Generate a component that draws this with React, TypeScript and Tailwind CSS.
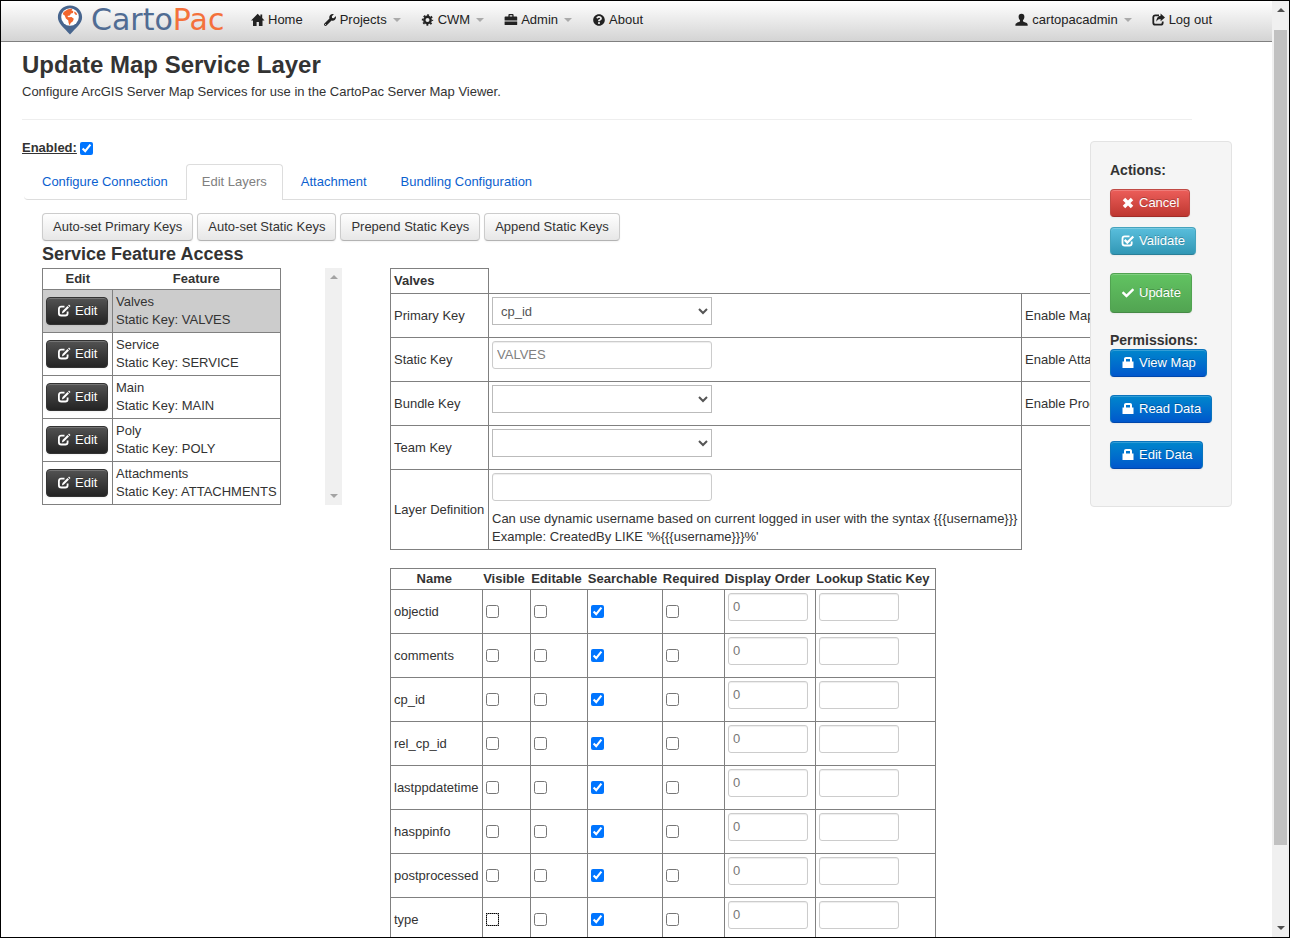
import type { ReactNode } from 'react';
import { FaCheck, FaQuestionCircle, FaWrench } from 'react-icons/fa';
import clsx from 'clsx';

const FEATURES = [
  { name: 'Valves', key: 'VALVES' },
  { name: 'Service', key: 'SERVICE' },
  { name: 'Main', key: 'MAIN' },
  { name: 'Poly', key: 'POLY' },
  { name: 'Attachments', key: 'ATTACHMENTS' },
];

const FIELDS = ['objectid', 'comments', 'cp_id', 'rel_cp_id', 'lastppdatetime', 'hasppinfo', 'postprocessed', 'type'];

const TABS = ['Configure Connection', 'Edit Layers', 'Attachment', 'Bundling Configuration'];

const KEY_ACTIONS = ['Auto-set Primary Keys', 'Auto-set Static Keys', 'Prepend Static Keys', 'Append Static Keys'];

/* ---------- icons ---------- */

function Icon({ children }: { children: ReactNode }) {
  return (
    <svg viewBox="0 0 14 14" className="w-3.5 h-3.5 shrink-0" fill="currentColor" aria-hidden="true">
      {children}
    </svg>
  );
}

const HomeIcon = () => (
  <Icon>
    <path d="M6.7.8 0 7.4h2V13h3.6V9h2.3v4h3.6V7.4h2L11.2 5V1.6H9.4v1.8z" />
  </Icon>
);

const CogIcon = () => (
  <Icon>
    <circle cx="6.5" cy="7" r="3.2" fill="none" stroke="currentColor" strokeWidth="2.4" />
    <circle cx="6.5" cy="7" r="4.9" fill="none" stroke="currentColor" strokeWidth="1.6" strokeDasharray="1.9 1.95" strokeDashoffset="0.95" />
  </Icon>
);

const BriefcaseIcon = () => (
  <Icon>
    <path d="M4.4 3.5V2.2c0-.7.4-1.200 1.100-1.200h3c.7 0 1.100.5 1.100 1.200v1.300h2.800c.5 0 .8.3.8.8v3.200H.6V4.300c0-.5.3-.8.8-.8zm1.300 0h2.600V2.300H5.700zM.6 8.400h12.600v3c0 .4-.2.6-.6.6H1.200c-.4 0-.6-.2-.6-.6z" />
  </Icon>
);

const UserIcon = () => (
  <Icon>
    <path d="M6.500.8c1.900 0 2.900 1.300 2.900 3 0 1.400-.6 2.600-1.300 3.300-.2.300-.2 1.200.1 1.500.8.700 3.900 1.200 4.300 2.400.2.500.2 1.200.2 1.700H.4c0-.5 0-1.200.2-1.700C1 9.800 4 9.300 4.800 8.600c.3-.3.3-1.200.1-1.500-.7-.7-1.300-1.900-1.300-3.300 0-1.700 1-3 2.900-3z" />
  </Icon>
);

const LogoutIcon = () => (
  <Icon>
    <path d="M7 2.300H3.300C2 2.300 1.300 3 1.300 4.300v5.400c0 1.300.7 2 2 2h5.400c1.300 0 2-.7 2-2V8.500" fill="none" stroke="currentColor" strokeWidth="1.800" />
    <path d="M8.600.6 13 4.400 8.600 8.200V6C6.700 6 5.500 6.600 4.300 8.700 4.300 5.300 5.900 3 8.600 2.800z" />
  </Icon>
);

const EditIcon = () => (
  <Icon>
    <path d="M7.500 2.700H4.300C2.600 2.700 1.900 3.500 1.900 5v4.200c0 1.600.7 2.300 2.400 2.300h4c1.600 0 2.300-.7 2.300-2.300V7.500" fill="none" stroke="currentColor" strokeWidth="1.800" />
    <path d="m4.900 9.400.6-2.300 5-5 1.500 1.500-5 5zM11.100 1.500l.9-.9 1.500 1.500-.9.900z" />
  </Icon>
);

const ValidateIcon = () => (
  <Icon>
    <path d="M8.500 2.300H3.800C2.300 2.300 1.500 3 1.500 4.600v4.600c0 1.600.8 2.300 2.300 2.300h4.600c1.600 0 2.300-.7 2.300-2.300V7.500" fill="none" stroke="currentColor" strokeWidth="1.800" />
    <path d="m3.700 5.900 2.600 2.600 6-6" fill="none" stroke="currentColor" strokeWidth="2.300" />
  </Icon>
);

const RemoveIcon = () => (
  <Icon>
    <path d="m3 3 8 8M11 3l-8 8" fill="none" stroke="currentColor" strokeWidth="3.500" />
  </Icon>
);

const LockIcon = () => (
  <Icon>
    <path d="M1.500 5.500H3V3C3 1.800 3.800 1 5 1h4c1.200 0 2 .8 2 2v2.500h1.500V12h-11zm3.500 0h4V3H5z" />
  </Icon>
);

function Triangle({ up = false, className }: { up?: boolean; className: string }) {
  return (
    <svg viewBox="0 0 8 4" className={className} fill="currentColor" aria-hidden="true">
      <path d={up ? 'M4 0l4 4H0z' : 'M0 0h8L4 4z'} />
    </svg>
  );
}

function Logo() {
  return (
    <a href="#" className="flex items-center gap-2 w-[184px]">
      <svg viewBox="0 0 26 30" className="w-[26px] h-[30px] shrink-0" aria-hidden="true">
        <path d="M13 .500C6 .500.900 5.700.900 12.200.900 18.500 6.500 22 13 29.500 19.500 22 25.100 18.500 25.100 12.200 25.100 5.700 20 .500 13 .500z" fill="#47658e" />
        <circle cx="13" cy="12" r="8.800" fill="#fff" />
        <path d="M8.500 5.800c2-1.800 4.500-2.400 7-2l-1 1.700 1.800.6-.3 2-2 .5-1.200 2-2.500.4 1.200 1.200 3-.2 2.300 1.800-.9 2.500-2.300 1.800-.8 2.500-1.200-2.600-.3-2.600-2.400-2-1.200-3-1.800-1.200c0-1.300 1-2.400 2.600-3.400z" fill="#f1662f" />
        <path d="m17.500 6.500 2 1.400.6 2.200-1.600-.4-1.300-1.600z" fill="#f1662f" />
      </svg>
      <span className="font-['DejaVu_Sans',sans-serif] text-[30px] leading-[30px] text-[#506c93]">
        Carto<span className="text-[#f4713b]">Pac</span>
      </span>
    </a>
  );
}

/* ---------- controls ---------- */

function NavItem({ icon, label, menu = false }: { icon: ReactNode; label: string; menu?: boolean }) {
  return (
    <a href="#" className="flex items-center gap-[3px] px-2.5 text-[#222]">
      {icon}
      <span>{label}</span>
      {menu && <Triangle className="w-2 h-1 ml-[3px] text-[#aaa]" />}
    </a>
  );
}

const BUTTON_STYLES = {
  plain: 'bg-linear-to-b from-white to-[#e6e6e6] border-[#ccc] border-b-[#b3b3b3] text-[#333]',
  dark: 'bg-linear-to-b from-[#555] to-[#222] border-[#333] text-white text-shadow-[0_-1px_0_rgba(0,0,0,0.25)]',
  danger: 'bg-linear-to-b from-[#ee5f5b] to-[#bd362f] border-[#c04a45] border-b-[#a12d28] text-white text-shadow-[0_-1px_0_rgba(0,0,0,0.25)]',
  info: 'bg-linear-to-b from-[#5bc0de] to-[#2f96b4] border-[#45a3bd] border-b-[#2a7f98] text-white text-shadow-[0_-1px_0_rgba(0,0,0,0.25)]',
  success: 'bg-linear-to-b from-[#62c462] to-[#51a351] border-[#51a351] border-b-[#468a46] text-white text-shadow-[0_-1px_0_rgba(0,0,0,0.25)]',
  primary: 'bg-linear-to-b from-[#0088cc] to-[#0055cc] border-[#0a74bd] border-b-[#0047ab] text-white text-shadow-[0_-1px_0_rgba(0,0,0,0.25)]',
};

interface ButtonProps {
  variant: keyof typeof BUTTON_STYLES;
  icon?: ReactNode;
  tall?: boolean;
  children: ReactNode;
}

function Button({ variant, icon, tall = false, children }: ButtonProps) {
  return (
    <button
      type="button"
      className={clsx(
        'flex items-center gap-1 px-2.5 border rounded bg-origin-border whitespace-nowrap',
        'shadow-[inset_0_1px_0_rgba(255,255,255,0.2),0_1px_2px_rgba(0,0,0,0.05)]',
        tall ? 'h-10' : 'h-7',
        BUTTON_STYLES[variant],
      )}
    >
      {icon}
      {children}
    </button>
  );
}

const INPUT = 'block h-7 px-1 mb-[9px] border border-[#ccc] rounded-[3px] bg-white text-[#777] shadow-[inset_0_1px_1px_rgba(0,0,0,0.075)]';
const SELECT = 'block w-[220px] h-7 px-1 mb-[9px] border border-[#bbb] bg-white text-[#555]';
const CELL = 'border border-[#808080] p-[3px]';

/* ---------- sections ---------- */

function Navbar() {
  return (
    <nav className="flex items-center h-[41px] pl-14 pr-[50px] pb-0.5 bg-linear-to-b from-white to-[#d4d4d4] border-b border-[#808080]">
      <Logo />
      <div className="flex">
        <NavItem icon={<HomeIcon />} label="Home" />
        <NavItem icon={<FaWrench className="w-3.5 h-3" />} label="Projects" menu />
        <NavItem icon={<CogIcon />} label="CWM" menu />
        <NavItem icon={<BriefcaseIcon />} label="Admin" menu />
        <NavItem icon={<FaQuestionCircle className="w-3.5 h-3" />} label="About" />
      </div>
      <div className="flex ml-auto">
        <NavItem icon={<UserIcon />} label="cartopacadmin" menu />
        <NavItem icon={<LogoutIcon />} label="Log out" />
      </div>
    </nav>
  );
}

function FeatureList() {
  return (
    <div className="flex justify-between items-stretch w-[300px] shrink-0">
      <table className="border-collapse border border-[#808080] w-[239px]">
        <thead>
          <tr>
            <th className="w-[70px] py-px">Edit</th>
            <th className="py-px">Feature</th>
          </tr>
        </thead>
        <tbody>
          {FEATURES.map((feature, index) => (
            <tr key={feature.key} className={index === 0 ? 'bg-[#ccc]' : ''}>
              <td className={CELL}>
                <Button variant="dark" icon={<EditIcon />}>Edit</Button>
              </td>
              <td className={clsx(CELL, 'whitespace-nowrap')}>
                {feature.name}
                <br />
                Static Key: {feature.key}
              </td>
            </tr>
          ))}
        </tbody>
      </table>
      <div className="flex flex-col justify-between items-center w-[17px] py-[7px] bg-[#f0f0f0] text-[#a3a3a3]">
        <Triangle up className="w-2 h-1" />
        <Triangle className="w-2 h-1" />
      </div>
    </div>
  );
}

function LayerSettings() {
  return (
    <table className="border-collapse w-[780px]">
      <thead>
        <tr>
          <th className={clsx(CELL, 'w-[98px] text-left')}>Valves</th>
          <th className="w-[533px]" />
          <th />
        </tr>
      </thead>
      <tbody>
        <tr>
          <td className={CELL}><label htmlFor="primary-key">Primary Key</label></td>
          <td className={CELL}>
            <select id="primary-key" className={SELECT} defaultValue="cp_id">
              <option>cp_id</option>
            </select>
          </td>
          <td className={CELL}>Enable Map</td>
        </tr>
        <tr>
          <td className={CELL}><label htmlFor="static-key">Static Key</label></td>
          <td className={CELL}>
            <input id="static-key" type="text" className={clsx(INPUT, 'w-[220px] pb-0.5 placeholder:text-[#808080]')} placeholder="VALVES" />
          </td>
          <td className={CELL}>Enable Attachments</td>
        </tr>
        <tr>
          <td className={CELL}><label htmlFor="bundle-key">Bundle Key</label></td>
          <td className={CELL}><select id="bundle-key" className={SELECT} /></td>
          <td className={CELL}>Enable Processing</td>
        </tr>
        <tr>
          <td className={CELL}><label htmlFor="team-key">Team Key</label></td>
          <td className={CELL}><select id="team-key" className={SELECT} /></td>
        </tr>
        <tr>
          <td className={clsx(CELL, 'whitespace-nowrap')}><label htmlFor="layer-definition">Layer Definition</label></td>
          <td className={clsx(CELL, 'whitespace-nowrap')}>
            <input id="layer-definition" type="text" className={clsx(INPUT, 'w-[220px]')} />
            {'Can use dynamic username based on current logged in user with the syntax {{{username}}}'}
            <br />
            {"Example: CreatedBy LIKE '%{{{username}}}%'"}
          </td>
        </tr>
      </tbody>
    </table>
  );
}

function FieldTable() {
  const heading = 'border-y border-[#808080] py-px pr-[5px] whitespace-nowrap';

  return (
    <table className="table-fixed border-collapse border border-[#808080] w-[546px] mt-[18px]">
      <thead>
        <tr>
          <th className={clsx(heading, 'w-[92px]')}>Name</th>
          <th className={clsx(heading, 'w-12')}>Visible</th>
          <th className={clsx(heading, 'w-[57px]')}>Editable</th>
          <th className={clsx(heading, 'w-[75px]')}>Searchable</th>
          <th className={clsx(heading, 'w-[62px]')}>Required</th>
          <th className={clsx(heading, 'w-[91px]')}>Display Order</th>
          <th className={heading}>Lookup Static Key</th>
        </tr>
      </thead>
      <tbody>
        {FIELDS.map((field) => (
          <tr key={field}>
            <td className={CELL}>{field}</td>
            <td className={CELL}>
              <input
                type="checkbox"
                aria-label={`${field} visible`}
                className={clsx('block', field === 'type' && 'outline-1 outline-dotted outline-black -outline-offset-1')}
              />
            </td>
            <td className={CELL}><input type="checkbox" aria-label={`${field} editable`} className="block" /></td>
            <td className={CELL}><input type="checkbox" aria-label={`${field} searchable`} className="block" defaultChecked /></td>
            <td className={CELL}><input type="checkbox" aria-label={`${field} required`} className="block" /></td>
            <td className={CELL}><input type="text" aria-label={`${field} display order`} className={clsx(INPUT, 'w-20 pb-0.5')} defaultValue="0" /></td>
            <td className={CELL}><input type="text" aria-label={`${field} lookup static key`} className={clsx(INPUT, 'w-20')} /></td>
          </tr>
        ))}
      </tbody>
    </table>
  );
}

function ActionsPanel() {
  return (
    <aside className="w-[142px] h-[366px] shrink-0 mt-[21px] p-[19px] bg-[#f5f5f5] border border-[#e3e3e3] rounded">
      <h3 className="text-sm leading-[18px] font-bold">Actions:</h3>
      <div className="flex flex-col items-start gap-2.5 mt-2.5">
        <Button variant="danger" icon={<RemoveIcon />}>Cancel</Button>
        <Button variant="info" icon={<ValidateIcon />}>Validate</Button>
      </div>
      <div className="mt-[18px]">
        <Button variant="success" tall icon={<FaCheck className="w-3.5 h-3" />}>Update</Button>
      </div>
      <h3 className="mt-[18px] text-sm leading-[18px] font-bold">Permissions:</h3>
      <div className="flex flex-col items-start gap-[18px]">
        <Button variant="primary" icon={<LockIcon />}>View Map</Button>
        <Button variant="primary" icon={<LockIcon />}>Read Data</Button>
        <Button variant="primary" icon={<LockIcon />}>Edit Data</Button>
      </div>
    </aside>
  );
}

export default function App() {
  return (
    <div className="flex h-screen overflow-hidden border border-black bg-white font-['Liberation_Sans',Arial,sans-serif] text-[13px] leading-[18px] text-[#333]">
      <div className="flex-1 min-w-0 overflow-hidden">
        <Navbar />

        <main className="pl-[21px] pr-10 pt-[5px]">
          <header className="mr-10 pb-[18px] border-b border-[#eee]">
            <h1 className="text-2xl leading-9 font-bold">Update Map Service Layer</h1>
            <p>Configure ArcGIS Server Map Services for use in the CartoPac Server Map Viewer.</p>
          </header>

          <div className="flex items-start">
            <div className="flex-1 min-w-0 overflow-hidden pt-[19px]">
              <div className="flex items-center gap-[3px]">
                <label htmlFor="enabled" className="font-bold underline">Enabled:</label>
                <input id="enabled" type="checkbox" defaultChecked />
              </div>

              {/* Tab strip */}
              <div className="flex gap-0.5 ml-0.5 mt-[7px] pl-0.5 border-b border-[#ddd] rounded-bl">
                {TABS.map((tab) => (
                  <a
                    key={tab}
                    href="#"
                    className={clsx(
                      'px-[15px] pt-2 pb-[9px] -mb-px border border-b-0 rounded-t',
                      tab === 'Edit Layers' ? 'bg-white border-[#ddd] text-[#808080]' : 'border-transparent text-[#0b5fcf]',
                    )}
                  >
                    {tab}
                  </a>
                ))}
              </div>

              <div className="pl-5 pt-[13px]">
                <div className="flex gap-1">
                  {KEY_ACTIONS.map((action) => (
                    <Button key={action} variant="plain">{action}</Button>
                  ))}
                </div>
                <h2 className="text-lg leading-[27px] font-bold">Service Feature Access</h2>
                <div className="flex items-start gap-12">
                  <FeatureList />
                  <div className="shrink-0">
                    <LayerSettings />
                    <FieldTable />
                  </div>
                </div>
              </div>
            </div>

            <ActionsPanel />
          </div>
        </main>
      </div>

      {/* Window scrollbar */}
      <div className="flex flex-col items-center w-[17px] shrink-0 py-[7px] bg-[#f0f0f0] text-[#505050]">
        <Triangle up className="w-2 h-1" />
        <div className="flex-1 w-[13px] pt-[18px]">
          <div className="h-[91%] bg-[#c1c1c1]" />
        </div>
        <Triangle className="w-2 h-1" />
      </div>
    </div>
  );
}
